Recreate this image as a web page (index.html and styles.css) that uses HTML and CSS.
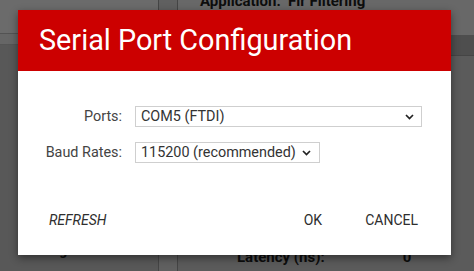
FILE: index.html
```html
<!DOCTYPE html>
<html>
<head>
<meta charset="utf-8">
<link rel="stylesheet" href="styles.css">
</head>
<body>
<div class="app">
  <div class="left-pane">
    <div class="left-top"></div>
    <div class="left-tab"></div>
    <div class="left-body"><span class="left-text">Settings</span></div>
  </div>
  <div class="splitter"></div>
  <div class="right-pane">
    <div class="app-title">Application:&nbsp;&nbsp;Fir Filtering</div>
    <div class="right-band"></div>
    <div class="right-body">
      <div class="latency"><span>Latency (ns):</span><span class="latency-val">0</span></div>
    </div>
  </div>
</div>
<div class="overlay"></div>
<div class="dialog">
  <div class="dialog-header">Serial Port Configuration</div>
  <div class="dialog-body">
    <div class="form">
      <label class="form-label">Ports:</label>
      <div class="select select-wide">
        <span class="select-text">COM5 (FTDI)</span>
        <svg class="chevron" width="9" height="6" viewBox="0 0 9 6"><path d="M1 1 L4.5 4.5 L8 1" fill="none" stroke="#222" stroke-width="1.7"/></svg>
      </div>
      <label class="form-label">Baud Rates:</label>
      <div class="select select-fit">
        <span class="select-text">115200 (recommended)</span>
        <svg class="chevron" width="9" height="6" viewBox="0 0 9 6"><path d="M1 1 L4.5 4.5 L8 1" fill="none" stroke="#222" stroke-width="1.7"/></svg>
      </div>
    </div>
    <div class="actions">
      <button class="btn btn-refresh">REFRESH</button>
      <div class="actions-right">
        <button class="btn">OK</button>
        <button class="btn">CANCEL</button>
      </div>
    </div>
  </div>
</div>
</body>
</html>
```
FILE: styles.css
```css
html, body {
  margin: 0;
  padding: 0;
  width: 474px;
  height: 271px;
  overflow: hidden;
  font-family: Roboto, "Liberation Sans", sans-serif;
}

.app {
  display: flex;
  width: 474px;
  height: 271px;
  background: #cbcbcb;
}

.left-pane {
  width: 158px;
  display: flex;
  flex-direction: column;
}
.left-top {
  height: 33px;
  background: #ededed;
  border-bottom: 1px solid #b8b8b8;
}
.left-tab {
  height: 10px;
  background: #e2e2e2;
  border-bottom: 1px solid #bdbdbd;
}
.left-body {
  flex: 1;
  background: #c4c4c4;
  display: flex;
  align-items: flex-end;
  padding: 0 0 13px 22px;
}
.left-text {
  font-size: 14px;
  font-weight: bold;
  color: #222;
}

.splitter {
  width: 18px;
  background: #d6d6d6;
  border-left: 1px solid #9a9a9a;
  border-right: 1px solid #9a9a9a;
}

.right-pane {
  flex: 1;
  display: flex;
  flex-direction: column;
  background: #cdcdcd;
}
.app-title {
  height: 43px;
  margin-top: -8px;
  padding-left: 22px;
  font-size: 15px;
  font-weight: bold;
  color: #1e1e1e;
  background: #e6e6e6;
  box-sizing: border-box;
}
.right-band {
  height: 20px;
  background: #adadad;
  border-bottom: 1px solid #9a9a9a;
}
.right-body {
  flex: 1;
  display: flex;
  align-items: flex-end;
  padding: 0 0 5px 59px;
  background: #c9c9c9;
}
.latency {
  display: flex;
  gap: 78px;
  font-size: 15px;
  font-weight: bold;
  color: #1e1e1e;
}

.overlay {
  position: absolute;
  inset: 0;
  background: rgba(0, 0, 0, 0.55);
}

.dialog {
  position: absolute;
  left: 18px;
  top: 10px;
  width: 433px;
  height: 245px;
  background: #fff;
  box-shadow: 0 3px 8px rgba(0, 0, 0, 0.45);
  display: flex;
  flex-direction: column;
}

.dialog-header {
  height: 61px;
  background: #cc0000;
  color: #fff;
  font-size: 28.8px;
  display: flex;
  align-items: center;
  padding-left: 21px;
  padding-bottom: 1px;
  box-sizing: border-box;
}

.dialog-body {
  flex: 1;
  display: flex;
  flex-direction: column;
  padding: 35px 29px 0 12px;
}

.form {
  display: grid;
  grid-template-columns: 92px 1fr;
  column-gap: 13px;
  row-gap: 15px;
  align-items: center;
  justify-items: start;
}

.form-label {
  justify-self: end;
  font-size: 14.4px;
  color: #444;
}

.select {
  height: 21px;
  box-sizing: border-box;
  border: 1px solid #cfcfcf;
  display: flex;
  align-items: center;
  padding: 0 7px 0 5px;
  font-size: 14.4px;
  color: #333;
}
.select-wide {
  width: 287px;
  justify-self: stretch;
  justify-content: space-between;
}
.select-fit {
  gap: 6px;
  padding-right: 8px;
}
.chevron {
  display: block;
  margin-top: 1px;
}

.actions {
  margin-top: 39px;
  display: flex;
  align-items: center;
  justify-content: space-between;
  padding-left: 19px;
  padding-right: 4px;
}
.actions-right {
  display: flex;
  gap: 43px;
}
.btn {
  background: none;
  border: none;
  padding: 0;
  height: 36px;
  font-family: Roboto, "Liberation Sans", sans-serif;
  font-size: 14px;
  color: #2e2e2e;
  cursor: pointer;
}
.btn-refresh {
  font-style: italic;
}
```
